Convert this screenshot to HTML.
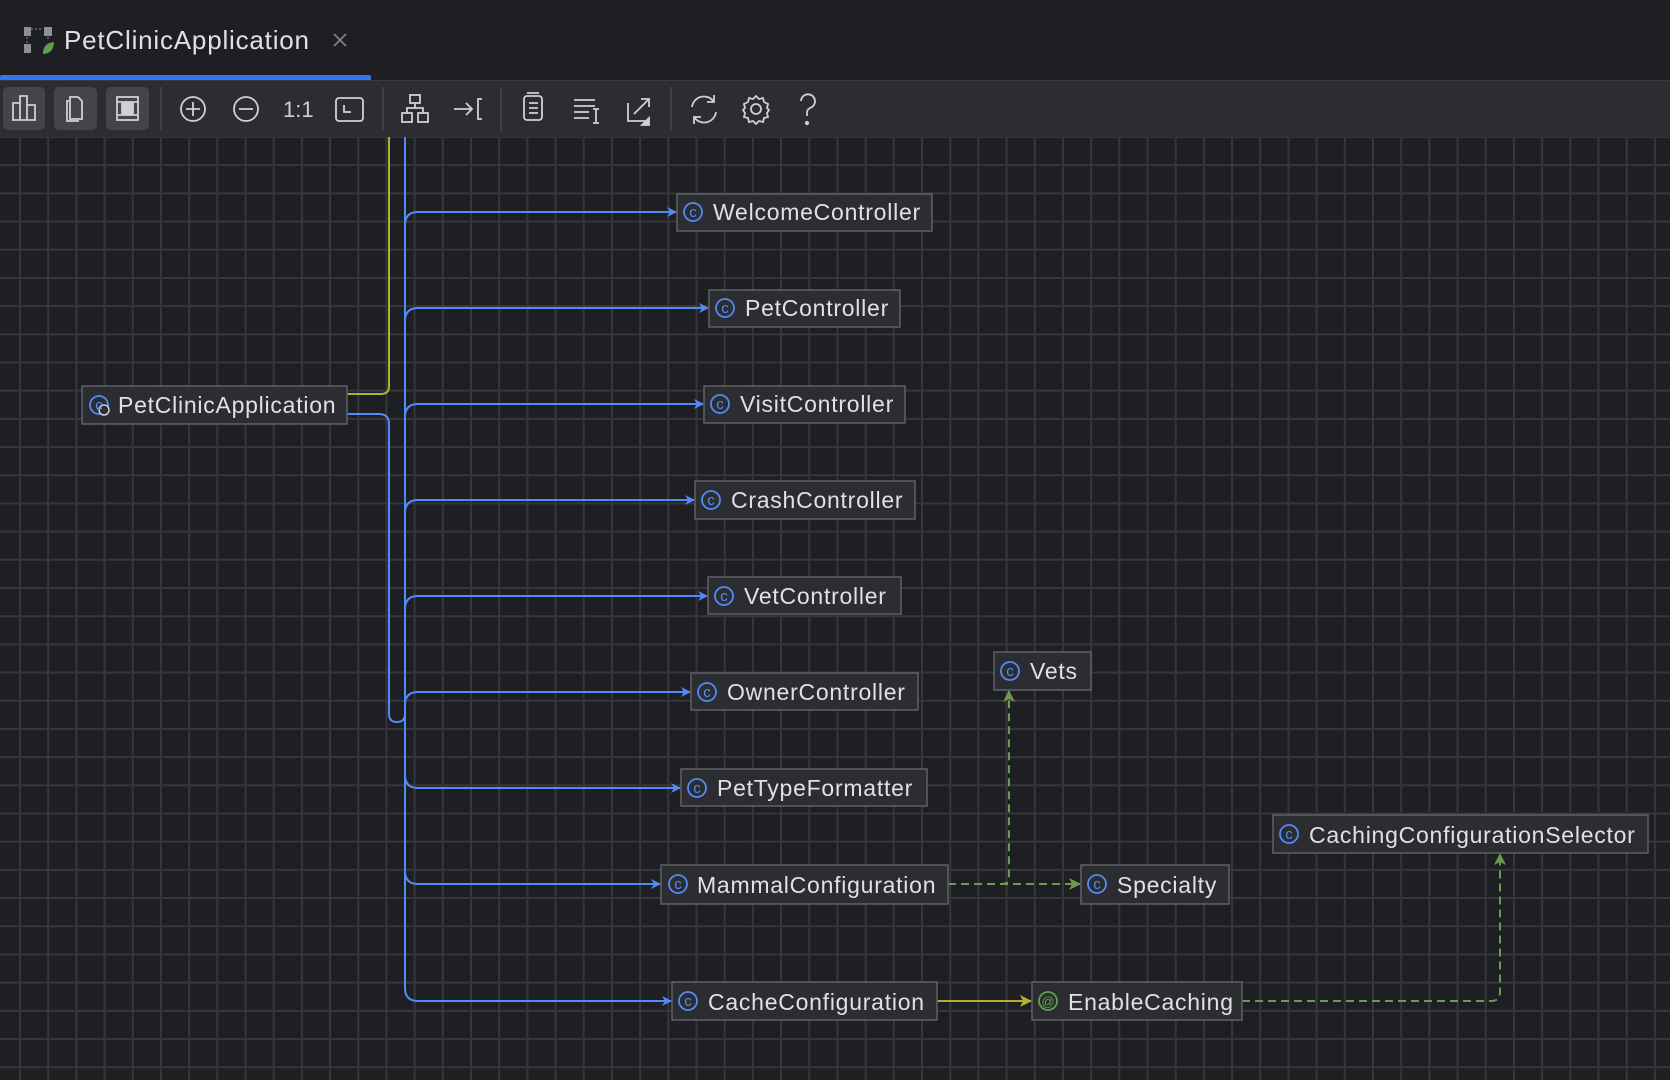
<!DOCTYPE html>
<html><head><meta charset="utf-8"><style>
html,body{margin:0;padding:0;background:#1e1f22;width:1670px;height:1080px;overflow:hidden;font-family:"Liberation Sans",sans-serif}
.tab{position:absolute;left:0;top:0;width:1670px;height:80px;background:#1e1f22}
.tb{position:absolute;left:0;top:80px;width:1670px;height:56px;background:#2b2d30;border-top:1px solid #393b40}
.canvas{position:absolute;left:0;top:136px;width:1670px;height:944px;
background-color:#1e1f22;
background-image:linear-gradient(#36373a 2px,transparent 2px),linear-gradient(90deg,#36373a 2px,transparent 2px);
background-size:28.2px 28.2px;background-position:19px 0px}
</style></head><body>
<div class="canvas"></div>
<div class="tab">
<svg width="400" height="80" style="position:absolute;left:0;top:0">
<rect x="24" y="27" width="7" height="9" fill="#8c8f94"/><rect x="44" y="27" width="8" height="9" fill="#8c8f94"/>
<rect x="24" y="44" width="7" height="9" fill="#8c8f94"/>
<path d="M31 29h12M27 37v6M48 37v4" stroke="#8c8f94" stroke-dasharray="2 2"/>
<path d="M43 54c0-8 4-11 11-12c0 7-4 12-11 12z" fill="#5fa04e"/>
<text x="64" y="49" font-size="26" letter-spacing="0.8" fill="#dfe1e5" font-family="Liberation Sans">PetClinicApplication</text>
<path d="M334 34l12 12M346 34l-12 12" stroke="#7d8087" stroke-width="1.8"/>
<rect x="0" y="75" width="371" height="6" rx="2" fill="#3574f0"/>
</svg>
</div>
<div class="tb">
<svg width="900" height="56" style="position:absolute;left:0;top:0" fill="none" stroke="#ced0d6" stroke-width="1.8">
<rect x="3" y="6" width="42" height="43" rx="5" fill="#43454a" stroke="none"/>
<rect x="54" y="6" width="43" height="43" rx="5" fill="#43454a" stroke="none"/>
<rect x="106" y="6" width="43" height="43" rx="5" fill="#43454a" stroke="none"/>
<path d="M13 39V22h7v17M20 39V15h7v24M27 39V24h8v15M12 39h24"/>
<path d="M70 16h8l4 4v18H70zM70 20h-3v20h12"/>
<rect x="117" y="16" width="21" height="23"/><rect x="122" y="21" width="11" height="13" fill="#ced0d6"/>
<path d="M117 21h4M117 34h4M134 21h4M134 34h4"/>
<path d="M161 6v44M383 6v44M501 6v44M671 6v44" stroke="#45474c" stroke-width="1.5"/>
<circle cx="193" cy="28" r="12"/><path d="M193 21v14M186 28h14"/>
<circle cx="246" cy="28" r="12"/><path d="M239 28h14"/>
<text x="283" y="36" font-size="22" fill="#ced0d6" stroke="none" font-family="Liberation Sans">1:1</text>
<rect x="336" y="17" width="27" height="23" rx="3"/><path d="M344 24v7h7"/>
<rect x="410" y="14" width="10" height="8"/><rect x="402" y="32" width="10" height="9"/><rect x="418" y="32" width="10" height="9"/><path d="M415 22v5M407 32v-5h16v5"/>
<path d="M454 28h18M466 22l6 6-6 6M482 18h-4v20h4"/>
<rect x="524" y="15" width="18" height="24" rx="3"/><path d="M527 12h12M529 22h9M529 27h9M529 32h9"/>
<path d="M574 19h21M574 25h21M574 31h15M574 37h15M596 28v14M593 28h6M593 42h6"/>
<path d="M628 22v18h18M634 33l14-14M641 18h8v8"/><path d="M649 44h-7l7-7z" fill="#ced0d6"/>
<path d="M692 26a12 12 0 0 1 22-5M716 31a12 12 0 0 1-22 5M714 14v7h-7M694 43v-7h7"/>
<circle cx="756" cy="28" r="5"/><path d="M756 15l3 3 4-1 1 4 4 2-1 4 2 2-2 3 1 4-4 1-1 4-4-1-3 3-3-3-4 1-1-4-4-1 1-4-2-3 2-2-1-4 4-2 1-4 4 1z"/>
<path d="M801 20a7 7 0 1 1 9 7c-2 1-3 3-3 5v3"/><circle cx="807" cy="42" r="1.2" fill="#ced0d6"/>
</svg>
</div>
<svg width="1670" height="1080" style="position:absolute;left:0;top:0" font-family="Liberation Sans">
<defs>
<marker id="ab" markerWidth="10" markerHeight="10" refX="9" refY="5" orient="auto" markerUnits="userSpaceOnUse"><path d="M0 0L10 5L0 10L3 5z" fill="#548af7"/></marker>
<marker id="ay" markerWidth="12" markerHeight="12" refX="11" refY="6" orient="auto" markerUnits="userSpaceOnUse"><path d="M0 0L12 6L0 12L3 6z" fill="#b3ae34"/></marker>
<marker id="ag" markerWidth="12" markerHeight="12" refX="11" refY="6" orient="auto" markerUnits="userSpaceOnUse"><path d="M0 0L12 6L0 12L3 6z" fill="#6b9a50"/></marker>
</defs>
<g fill="none" stroke-width="2">
<path d="M347 394h34q8 0 8-8V137" stroke="#b3ae34"/>
<path d="M347 414h32q10 0 10 10v290q0 8 8 8h0q8 0 8-8" stroke="#548af7"/>
<path d="M405 137v851q0 13 13 13" stroke="#548af7"/>
<g stroke="#548af7" marker-end="url(#ab)">
<path d="M405 225q0-13 13-13h258"/>
<path d="M405 321q0-13 13-13h290"/>
<path d="M405 417q0-13 13-13h285"/>
<path d="M405 513q0-13 13-13h276"/>
<path d="M405 609q0-13 13-13h289"/>
<path d="M405 705q0-13 13-13h272"/>
<path d="M405 775q0 13 13 13h262"/>
<path d="M405 871q0 13 13 13h242"/>
<path d="M418 1001h253"/>
</g>
<path d="M937 1001h94" stroke="#b3ae34" marker-end="url(#ay)"/>
<g stroke="#6b9a50" stroke-dasharray="8 5" marker-end="url(#ag)">
<path d="M948 884h132"/>
<path d="M948 884h54q7 0 7-7V691"/>
<path d="M1242 1001h249q9 0 9-9V854"/>
</g>
</g>
<g font-size="23" fill="#dfe1e5" letter-spacing="0.75">
<g stroke="#5e6167" stroke-width="1.5" fill="#2b2d30">
<rect x="82" y="386" width="265" height="38"/>
<rect x="677" y="194" width="255" height="37"/>
<rect x="709" y="290" width="191" height="37"/>
<rect x="704" y="386" width="201" height="37"/>
<rect x="695" y="481" width="220" height="38"/>
<rect x="708" y="577" width="193" height="37"/>
<rect x="691" y="673" width="227" height="37"/>
<rect x="681" y="769" width="246" height="37"/>
<rect x="661" y="865" width="287" height="39"/>
<rect x="672" y="982" width="265" height="38"/>
<rect x="994" y="652" width="97" height="38"/>
<rect x="1081" y="865" width="148" height="39"/>
<rect x="1273" y="815" width="375" height="38"/>
<rect x="1032" y="982" width="210" height="38"/>
</g>
<g fill="none" stroke="#548af7" stroke-width="1.8">
<circle cx="99" cy="405" r="9"/>
<circle cx="693" cy="212" r="9"/><circle cx="725" cy="308" r="9"/><circle cx="720" cy="404" r="9"/>
<circle cx="711" cy="500" r="9"/><circle cx="724" cy="596" r="9"/><circle cx="707" cy="692" r="9"/>
<circle cx="697" cy="788" r="9"/><circle cx="678" cy="884" r="9"/><circle cx="688" cy="1001" r="9"/>
<circle cx="1010" cy="671" r="9"/><circle cx="1097" cy="884" r="9"/><circle cx="1289" cy="834" r="9"/>
</g>
<circle cx="1048" cy="1001" r="9" fill="none" stroke="#5fa04e" stroke-width="1.8"/>
<circle cx="104" cy="410" r="5" fill="#2b2d30" stroke="#ced0d6" stroke-width="1.5"/>
<g font-size="15" fill="#548af7" text-anchor="middle" letter-spacing="0">
<text x="99" y="410">c</text><text x="693" y="217">c</text><text x="725" y="313">c</text><text x="720" y="409">c</text>
<text x="711" y="505">c</text><text x="724" y="601">c</text><text x="707" y="697">c</text><text x="697" y="793">c</text>
<text x="678" y="889">c</text><text x="688" y="1006">c</text><text x="1010" y="676">c</text><text x="1097" y="889">c</text><text x="1289" y="839">c</text>
<text x="1048" y="1006" fill="#5fa04e" font-size="13">@</text>
</g>
<text x="118" y="413">PetClinicApplication</text>
<text x="713" y="220">WelcomeController</text>
<text x="745" y="316">PetController</text>
<text x="740" y="412">VisitController</text>
<text x="731" y="508">CrashController</text>
<text x="744" y="604">VetController</text>
<text x="727" y="700">OwnerController</text>
<text x="717" y="796">PetTypeFormatter</text>
<text x="697" y="893">MammalConfiguration</text>
<text x="708" y="1010">CacheConfiguration</text>
<text x="1030" y="679">Vets</text>
<text x="1117" y="893">Specialty</text>
<text x="1309" y="843">CachingConfigurationSelector</text>
<text x="1068" y="1010">EnableCaching</text>
</g>
</svg>
</body></html>
